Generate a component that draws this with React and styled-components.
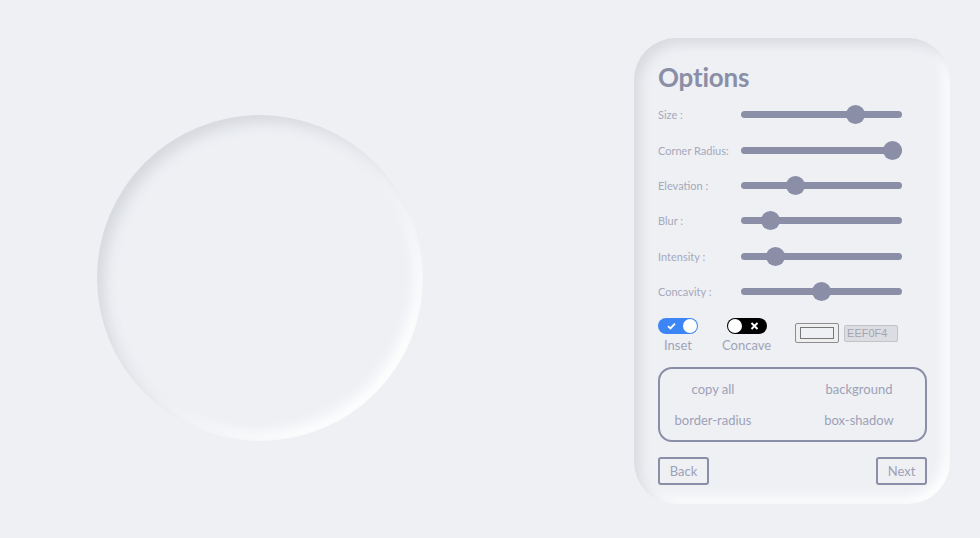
import React from "react";
import styled, { createGlobalStyle } from "styled-components";

const GlobalStyle = createGlobalStyle`
  html, body { margin: 0; padding: 0; background: #eef0f4; }
  body { font-family: Lato, "Open Sans", sans-serif; }
  * { box-sizing: border-box; }
`;

const Page = styled.div`
  height: 538px;
  display: flex;
  align-items: center;
  padding-left: 97px;
  gap: 211px;
`;

const Preview = styled.div`
  width: 326px;
  height: 326px;
  margin-top: 18px;
  border-radius: 50%;
  background: #eef0f4;
  box-shadow: inset 7px 7px 14px #d6d8de, inset -7px -7px 14px #ffffff;
`;

const Panel = styled.div`
  width: 316px;
  height: 466px;
  margin-top: 4px;
  border-radius: 42px;
  background: #eef0f4;
  box-shadow: inset 6px 6px 12px #d8dadf, inset -6px -6px 12px #ffffff;
  padding: 22px 23px 0 24px;
  display: flex;
  flex-direction: column;
`;

const Title = styled.h1`
  margin: 0;
  font-size: 26px;
  line-height: 34px;
  font-weight: 700;
  letter-spacing: -0.2px;
  color: #8a8ea6;
`;

const Sliders = styled.div`
  margin-top: 3px;
  display: flex;
  flex-direction: column;
`;

const Row = styled.div`
  height: 35.4px;
  display: flex;
  align-items: center;
`;

const Label = styled.span`
  width: 83px;
  font-size: 11px;
  color: #a6a9bb;
`;

const Track = styled.div`
  position: relative;
  width: 161px;
  height: 7px;
  border-radius: 4px;
  background: #8a8ea6;
`;

const Thumb = styled.div`
  position: absolute;
  top: 50%;
  width: 19px;
  height: 19px;
  margin-left: -9.5px;
  margin-top: -9.5px;
  border-radius: 50%;
  background: #8a8ea6;
`;

const Controls = styled.div`
  margin-top: 9px;
  display: flex;
  align-items: flex-start;
  gap: 24px;
`;

const ToggleItem = styled.div`
  display: flex;
  flex-direction: column;
  align-items: center;
`;

const Toggle = styled.div`
  position: relative;
  width: 40px;
  height: 16px;
  border-radius: 8px;
  background: ${(p) => (p.$on ? "#3b86f4" : "#000000")};
  display: flex;
  align-items: center;
  justify-content: ${(p) => (p.$on ? "flex-end" : "flex-start")};
  padding: 0 1px;
`;

const Knob = styled.div`
  width: 14px;
  height: 14px;
  border-radius: 50%;
  background: #ffffff;
`;

const ToggleIcon = styled.svg`
  position: absolute;
  top: 4px;
  left: ${(p) => (p.$on ? "9px" : "23px")};
  width: 9px;
  height: 8px;
`;

const ToggleLabel = styled.span`
  margin-top: 3px;
  font-size: 13px;
  line-height: 16px;
  color: #a0a4b8;
`;

const Swatch = styled.div`
  margin-top: 5px;
  width: 44px;
  height: 20px;
  border: 1px solid #8d8d8d;
  border-radius: 2px;
  padding: 3px 4px;
  background: #efefef;
`;

const SwatchColor = styled.div`
  width: 100%;
  height: 100%;
  border: 1px solid #777;
  background: #eef0f4;
`;

const HexInput = styled.div`
  margin-top: 7px;
  margin-left: -19px;
  width: 54px;
  height: 17px;
  border: 1px solid #c2c3c9;
  border-radius: 2px;
  background: #dcdde2;
  font-family: "Liberation Sans", Arial, sans-serif;
  font-size: 11px;
  line-height: 15px;
  padding-left: 2px;
  color: #a3a5b2;
`;

const CopyBox = styled.div`
  margin-top: 14px;
  width: 269px;
  height: 75px;
  border: 2px solid #8a8ea6;
  border-radius: 14px;
  padding: 4px 0 5px;
  display: grid;
  grid-template-columns: 106px 106px;
  grid-auto-rows: 31px;
  column-gap: 40px;
`;

const CopyItem = styled.span`
  display: flex;
  align-items: center;
  justify-content: center;
  white-space: nowrap;
  font-size: 13px;
  color: #9da1b7;
`;

const Nav = styled.div`
  margin-top: 15px;
  width: 269px;
  display: flex;
  justify-content: space-between;
`;

const NavButton = styled.div`
  width: 51px;
  height: 28px;
  border: 2px solid #8a8ea6;
  border-radius: 3px;
  display: flex;
  align-items: center;
  justify-content: center;
  font-size: 13px;
  color: #9da1b7;
`;

const sliders = [
  ["Size :", 0.74],
  ["Corner Radius:", 1],
  ["Elevation :", 0.32],
  ["Blur :", 0.14],
  ["Intensity :", 0.175],
  ["Concavity :", 0.5],
];

export default function App() {
  return (
    <>
      <GlobalStyle />
      <Page>
        <Preview />
        <Panel>
          <Title>Options</Title>
          <Sliders>
            {sliders.map(([label, v]) => (
              <Row key={label}>
                <Label>{label}</Label>
                <Track>
                  <Thumb style={{ left: `${9.5 + v * 142}px` }} />
                </Track>
              </Row>
            ))}
          </Sliders>
          <Controls>
            <ToggleItem>
              <Toggle $on>
                <ToggleIcon $on viewBox="0 0 9 8">
                  <path d="M1 4.2 L3.4 6.4 L8 1.6" stroke="#fff" strokeWidth="1.8" fill="none" />
                </ToggleIcon>
                <Knob />
              </Toggle>
              <ToggleLabel>Inset</ToggleLabel>
            </ToggleItem>
            <ToggleItem>
              <Toggle>
                <Knob />
                <ToggleIcon viewBox="0 0 9 8">
                  <path d="M1.5 1 L7.5 7 M7.5 1 L1.5 7" stroke="#fff" strokeWidth="1.9" fill="none" />
                </ToggleIcon>
              </Toggle>
              <ToggleLabel>Concave</ToggleLabel>
            </ToggleItem>
            <Swatch>
              <SwatchColor />
            </Swatch>
            <HexInput>EEF0F4</HexInput>
          </Controls>
          <CopyBox>
            <CopyItem>copy all</CopyItem>
            <CopyItem>background</CopyItem>
            <CopyItem>border-radius</CopyItem>
            <CopyItem>box-shadow</CopyItem>
          </CopyBox>
          <Nav>
            <NavButton>Back</NavButton>
            <NavButton>Next</NavButton>
          </Nav>
        </Panel>
      </Page>
    </>
  );
}
